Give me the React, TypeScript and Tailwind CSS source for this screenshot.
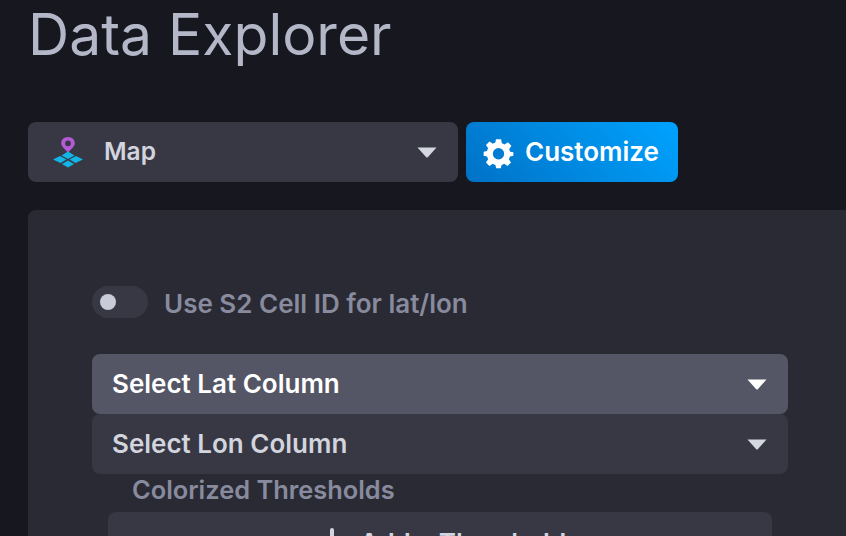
const ChevronDown = ({ className }: { className: string }) => (
  <svg width="20" height="11" viewBox="0 0 20 11" className={className}>
    <path d="M0.5 0.5 H19.5 L11 10 Q10 11 9 10 Z" fill="currentColor" />
  </svg>
);

const MapIcon = () => (
  <svg width="32" height="32" viewBox="0 0 32 32" className="shrink-0">
    <path
      d="M16 1 C12 1 9.2 3.8 9.2 7.2 C9.2 10.4 12.6 12.8 16 16.5 C19.4 12.8 22.8 10.4 22.8 7.2 C22.8 3.8 20 1 16 1 Z M16 4.4 A2.9 2.9 0 1 1 16 10.2 A2.9 2.9 0 1 1 16 4.4 Z"
      fill="#b45ad6"
      fillRule="evenodd"
    />
    <path d="M16 15.5 L22.5 19.5 L16 23 L9.5 19.5 Z" fill="#12b5e6" />
    <path d="M8 20.5 L14.5 24 L8.5 27.5 L1 24 Z" fill="#12b5e6" transform="translate(0 -0.5)" />
    <path d="M24 20.5 L31 24 L23.5 27.5 L17.5 24 Z" fill="#12b5e6" transform="translate(0 -0.5)" />
    <path d="M16 24.5 L22 28 L16 31.5 L10 28 Z" fill="#12b5e6" />
  </svg>
);

const GearIcon = () => (
  <svg width="31" height="31" viewBox="0 0 24 24" className="mt-[2px] shrink-0">
    <path
      fill="#ffffff"
      fillRule="evenodd"
      d="M10 1 H14 L14.6 4.1 A8.2 8.2 0 0 1 16.6 5 L19.3 3.3 L22 6 L20.2 8.7 A8.2 8.2 0 0 1 21 10.6 L23.5 11 V13.8 L20.9 14.4 A8.2 8.2 0 0 1 20 16.4 L21.7 19 L19 21.7 L16.4 20 A8.2 8.2 0 0 1 14.4 20.9 L13.8 23.5 H10.2 L9.6 20.9 A8.2 8.2 0 0 1 7.6 20 L5 21.7 L2.3 19 L4 16.4 A8.2 8.2 0 0 1 3.1 14.4 L0.5 13.8 V10.6 L3.1 10 A8.2 8.2 0 0 1 4 8 L2.3 5.4 L5 2.7 L7.6 4.4 A8.2 8.2 0 0 1 9.6 3.5 Z M12 7.8 A4.4 4.4 0 1 0 12 16.6 A4.4 4.4 0 1 0 12 7.8 Z"
    />
  </svg>
);

const PlusIcon = () => (
  <svg width="20" height="28" viewBox="0 0 20 28" className="shrink-0">
    <path d="M10 2 V26 M-2 14 H22" stroke="#d2d4de" strokeWidth="4" strokeLinecap="round" />
  </svg>
);

export default function App() {
  return (
    <div className="h-[536px] w-[846px] overflow-hidden bg-[#16171f] font-['Inter',sans-serif]">
      <div className="px-7">
        <h1 className="h-[122px] pt-[3px] text-[57px] leading-[64px] font-normal text-[#b4b7c7]">Data Explorer</h1>

        <div className="flex gap-2">
          <div className="flex h-[60px] w-[430px] items-center rounded-lg bg-[#383844] pr-[21px] pl-6">
            <MapIcon />
            <span className="ml-5 flex-1 pb-[2px] text-[24.5px] font-semibold text-[#d2d4de]">Map</span>
            <ChevronDown className="text-[#d4d6e0]" />
          </div>
          <div className="flex h-[60px] w-[212px] items-center gap-[11px] rounded-lg bg-linear-45 from-[#0072c6] to-[#00a3ff] pl-[17px] text-[26px] font-semibold text-white">
            <GearIcon />
            <span className="pb-[2px]">Customize</span>
          </div>
        </div>

        <div className="mt-7 w-[824px] rounded-t-lg bg-[#2a2a34] px-16 pt-[76px]">
          <div className="flex h-8 items-center">
            <div className="flex h-8 w-14 items-center rounded-full bg-[#383844] pl-2">
              <div className="h-4 w-4 rounded-full bg-[#c9ccd8]" />
            </div>
            <span className="ml-4 pt-[2px] text-[26px] font-semibold text-[#888b9e]">Use S2 Cell ID for lat/lon</span>
          </div>

          <div className="mt-9 flex h-[60px] items-center justify-between rounded-lg bg-[#555665] pr-[21px] pl-5 text-[26px] font-semibold text-white">
            <span className="pb-[2px]">Select Lat Column</span>
            <ChevronDown className="text-white" />
          </div>
          <div className="flex h-[60px] items-center justify-between rounded-lg bg-[#383844] pr-[21px] pl-5 text-[26px] font-semibold text-[#d2d4de]">
            <span className="pb-[2px]">Select Lon Column</span>
            <ChevronDown className="text-[#d4d6e0]" />
          </div>

          <div className="h-[38px] pl-10 text-[25.4px] leading-[31px] font-semibold text-[#888b9e]">Colorized Thresholds</div>

          <div className="mx-4 flex h-[60px] items-center justify-center gap-[18px] rounded-lg bg-[#383844] pl-2 text-[26px] font-semibold text-[#d2d4de]">
            <PlusIcon />
            <span>Add a Threshold</span>
          </div>
        </div>
      </div>
    </div>
  );
}
